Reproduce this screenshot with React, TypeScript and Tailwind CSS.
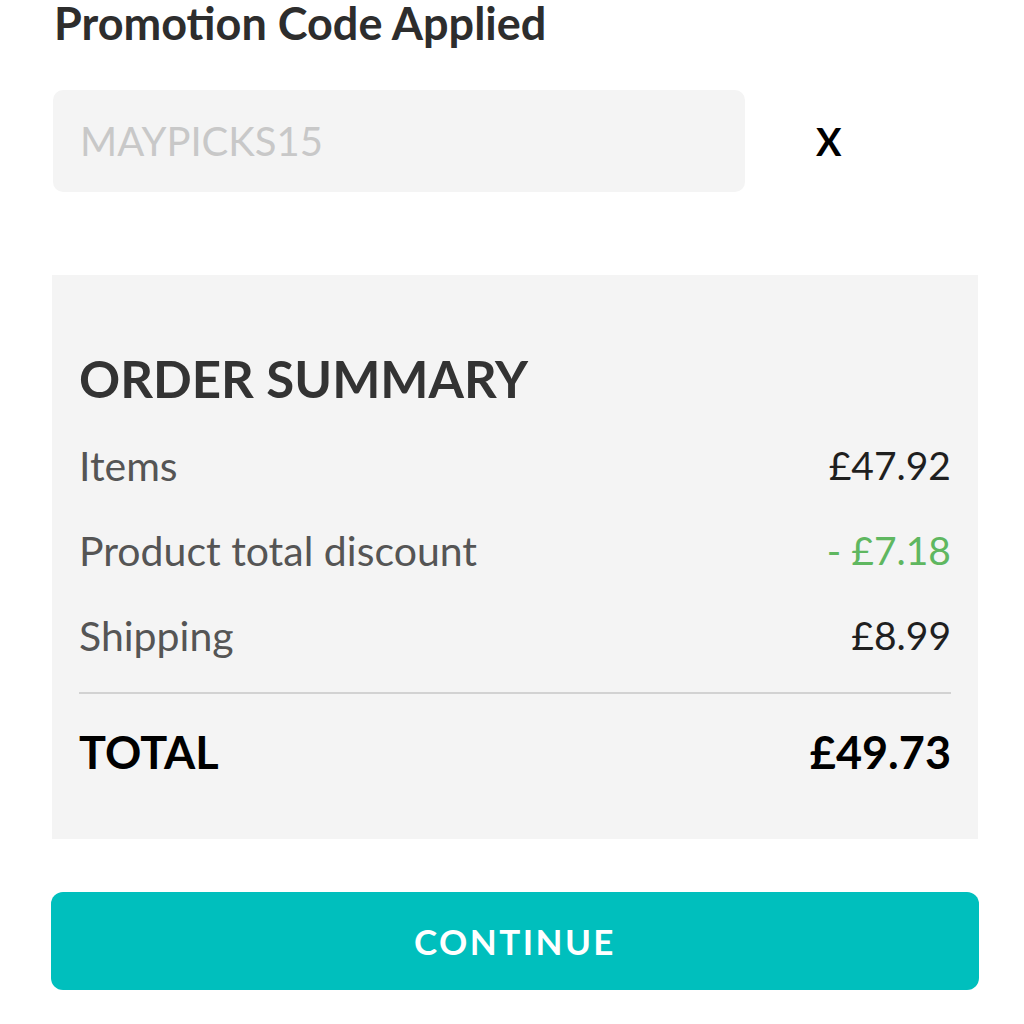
import React from "react";

const ROWS = [
  { label: "Items", value: "£47.92", green: false },
  { label: "Product total discount", value: "- £7.18", green: true },
  { label: "Shipping", value: "£8.99", green: false },
];

export default function App() {
  return (
    <div className="w-[1024px] h-[1024px] bg-white px-[52px] font-['Lato','Liberation_Sans',sans-serif] overflow-hidden">
      <h1 className="text-[45px] font-bold leading-[1.05] text-[#2d2d2d] pl-[2px]">Promotion Code Applied</h1>

      <div className="mt-[43px] flex items-center">
        <div className="w-[692px] h-[102px] ml-[1px] rounded-[10px] bg-[#f4f4f4] flex items-center pl-[27px] text-[40px] leading-none text-[#c8c8c8]">
          MAYPICKS15
        </div>
        <button className="ml-[71px] text-[38px] font-bold leading-none text-black">X</button>
      </div>

      <div className="mt-[83px] w-[926px] h-[564px] bg-[#f4f4f4] px-[27px] pt-[78px]">
        <h2 className="text-[51px] font-bold leading-none text-[#333333]">ORDER SUMMARY</h2>
        <div className="mt-[19px]">
          {ROWS.map(r => (
            <div key={r.label} className="h-[85px] flex items-center justify-between leading-none">
              <span className="text-[41px] text-[#555555]">{r.label}</span>
              <span className={r.green ? "text-[39px] text-[#5fb760]" : "text-[39px] text-[#1f1f1f]"}>{r.value}</span>
            </div>
          ))}
        </div>
        <div className="mt-[14px] h-[2px] bg-[#d2d2d2]" />
        <div className="mt-[16px] h-[85px] flex items-center justify-between text-[45px] font-bold leading-none text-black">
          <span>TOTAL</span>
          <span>£49.73</span>
        </div>
      </div>

      <button className="mt-[53px] -ml-[1px] w-[928px] h-[98px] rounded-[12px] bg-[#00bfbd] flex items-center justify-center text-[35px] font-bold leading-none tracking-[0.07em] text-white">
        CONTINUE
      </button>
    </div>
  );
}
